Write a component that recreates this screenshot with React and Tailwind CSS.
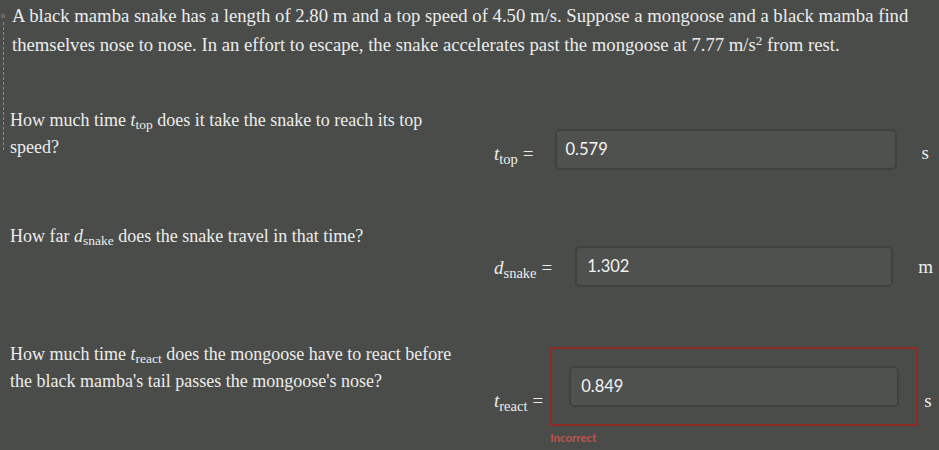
const serif = { fontFamily: '"Liberation Serif", "Times New Roman", serif' }
const sans = { fontFamily: 'Lato, "Open Sans", sans-serif' }

function Var({ v, sub }) {
  return (
    <span className="whitespace-nowrap">
      <i>{v}</i>
      <sub className="text-[13.5px] leading-none">{sub}</sub>
    </span>
  )
}

function Label({ v, sub, pt }) {
  return (
    <div className={`shrink-0 text-[19px] leading-[22px] whitespace-nowrap ${pt}`}>
      <i>{v}</i>
      <sub className="text-[14.5px] leading-none">{sub}</sub>
      <span className="ml-[5px]">=</span>
    </div>
  )
}

function Field({ value, w, pl }) {
  return (
    <div
      className={`h-[41px] ${w} ${pl} shrink-0 flex items-center rounded-[5px] border-2 border-[#404240] bg-[#4f514f] text-[16.5px] text-[#f4f4f4]`}
      style={sans}
    >
      {value}
    </div>
  )
}

export default function App() {
  return (
    <div className="relative w-[939px] h-[450px] overflow-hidden bg-[#4a4c4a] text-[#ececec]" style={serif}>
      {/* ruler mark on the left edge */}
      <div className="absolute left-[1px] top-[12px] text-[8px] leading-none text-[#9a9a9a]">o</div>
      <div className="absolute left-[3px] top-[22px] h-[128px] border-l border-dashed border-[#8a8a8a]" />

      <p className="pl-[12px] pr-[20px] pt-[1px] text-[18.7px] leading-[29px]">
        A black mamba snake has a length of 2.80 m and a top speed of 4.50 m/s. Suppose a mongoose and a black mamba find themselves nose to nose. In an effort to escape, the snake accelerates past the mongoose at 7.77 m/s
        <sup className="text-[13px] leading-none">2</sup> from rest.
      </p>

      {/* question 1 */}
      <div className="flex items-start mt-[48px] pl-[10px]">
        <div className="w-[484px] shrink-0">
          <p className="w-[462px] text-[18px] leading-[27px]">
            How much time <Var v="t" sub="top" /> does it take the snake to reach its top speed?
          </p>
        </div>
        <div className="flex items-start mt-[22px]">
          <Label v="t" sub="top" pt="pt-[14px]" />
          <div className="ml-[21px]">
            <Field value="0.579" w="w-[342px]" pl="pl-[9px]" />
          </div>
          <div className="ml-[25px] pt-[13px] text-[19px] leading-[22px]">s</div>
        </div>
      </div>

      {/* question 2 */}
      <div className="flex items-start mt-[53px] pl-[10px]">
        <div className="w-[484px] shrink-0">
          <p className="w-[462px] text-[18px] leading-[27px]">
            How far <Var v="d" sub="snake" /> does the snake travel in that time?
          </p>
        </div>
        <div className="flex items-start mt-[23px]">
          <Label v="d" sub="snake" pt="pt-[11px]" />
          <div className="ml-[23px]">
            <Field value="1.302" w="w-[318px]" pl="pl-[10px]" />
          </div>
          <div className="ml-[25px] pt-[10px] text-[19px] leading-[22px]">m</div>
        </div>
      </div>

      {/* question 3 */}
      <div className="flex items-start mt-[54px] pl-[10px]">
        <div className="w-[484px] shrink-0">
          <p className="w-[462px] text-[18px] leading-[27px]">
            How much time <Var v="t" sub="react" /> does the mongoose have to react before the black mamba's tail passes the mongoose's nose?
          </p>
        </div>
        <div className="flex items-start mt-[6px]">
          <Label v="t" sub="react" pt="pt-[43px]" />
          <div className="ml-[7px]">
            <div className="w-[368px] px-[17px] py-[17px] border-2 border-[#8f2b22]">
              <Field value="0.849" w="w-full" pl="pl-[10px]" />
            </div>
            <div className="mt-[4px] text-[11.5px] font-bold leading-[16px] text-[#c0524b]" style={sans}>
              Incorrect
            </div>
          </div>
          <div className="ml-[6px] pt-[43px] text-[19px] leading-[22px]">s</div>
        </div>
      </div>
    </div>
  )
}
